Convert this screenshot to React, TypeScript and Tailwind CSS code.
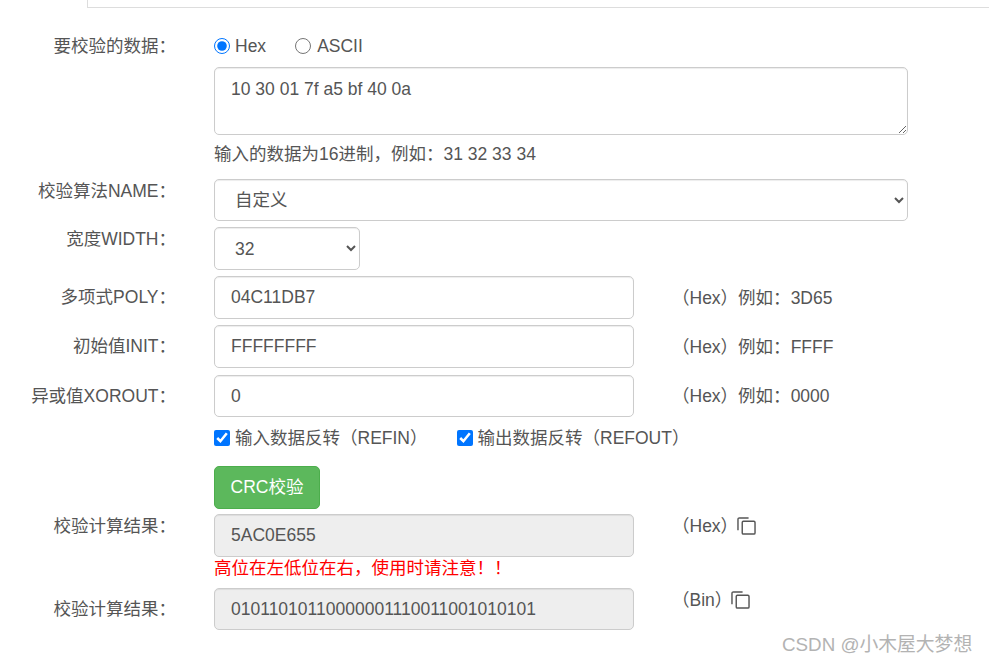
import type { ReactNode } from 'react';

const field = 'h-full w-full rounded-[5px] border border-[#ccc] px-4 text-[17.5px] text-[#555] outline-none shadow-[inset_0_1px_1px_rgba(0,0,0,0.075)]';

function CopyIcon() {
  return (
    <svg className="-ml-[1px] h-[18px] w-[19px] shrink-0 text-[#555]" viewBox="0 0 20 19" fill="none" stroke="currentColor" strokeWidth="1.5">
      <path d="M1 14V2.6c0-1 .6-1.6 1.6-1.6h9.6" />
      <rect x="5.5" y="4.5" width="13.5" height="13.5" rx="1.2" />
    </svg>
  );
}

function Row({ label, className, labelClass = 'pt-[9px]', children }: { label?: string; className: string; labelClass?: string; children: ReactNode }) {
  return (
    <div className={`grid grid-cols-[176px_694px] gap-x-[38px] ${className}`}>
      <div className={`text-right leading-6 whitespace-nowrap ${labelClass}`}>{label}</div>
      <div className="min-w-0">{children}</div>
    </div>
  );
}

function HexRow({ label, value, hint, className }: { label: string; value: string; hint: string; className: string }) {
  return (
    <Row label={label} className={className}>
      <div className="flex h-full items-center">
        <input className={`${field} !w-[420px] shrink-0`} defaultValue={value} />
        <span className="ml-[38px] leading-6 whitespace-nowrap">（Hex）例如：{hint}</span>
      </div>
    </Row>
  );
}

export default function App() {
  return (
    <div className="relative h-[664px] w-[989px] overflow-hidden bg-white font-['Liberation_Sans','Noto_Sans_CJK_SC',sans-serif] text-[17.5px] text-[#555]">
      <div className="ml-[87px] h-2 border-b border-l border-[#ddd]" />

      <Row label="要校验的数据：" className="mt-[26px]" labelClass="">
        <div className="flex h-6 items-center">
          <label className="flex items-center">
            <input type="radio" name="fmt" defaultChecked className="m-0 h-4 w-4 accent-[#0075ff]" />
            <span className="ml-[5px]">Hex</span>
          </label>
          <label className="ml-[29px] flex items-center">
            <input type="radio" name="fmt" className="m-0 h-4 w-4 accent-[#0075ff]" />
            <span className="ml-[6px]">ASCII</span>
          </label>
        </div>
      </Row>

      <Row className="mt-[9px]">
        <textarea className={`${field} block !h-[68px] py-[9px] leading-6`} defaultValue="10 30 01 7f a5 bf 40 0a" />
        <p className="mt-[7px] leading-6">输入的数据为16进制，例如：31 32 33 34</p>
      </Row>

      <Row label="校验算法NAME：" className="mt-[13px] h-[42px]" labelClass="pt-0">
        <select className={`${field} bg-white`} defaultValue="custom">
          <option value="custom">自定义</option>
        </select>
      </Row>

      <Row label="宽度WIDTH：" className="mt-[6px] h-[43px]" labelClass="pt-0">
        <select className={`${field} !w-[146px] bg-white`} defaultValue="32">
          <option value="32">32</option>
        </select>
      </Row>

      <HexRow label="多项式POLY：" value="04C11DB7" hint="3D65" className="mt-[6px] h-[43px]" />
      <HexRow label="初始值INIT：" value="FFFFFFFF" hint="FFFF" className="mt-[6px] h-[43px]" />
      <HexRow label="异或值XOROUT：" value="0" hint="0000" className="mt-[7px] h-[42px]" />

      <Row className="mt-[9px]" labelClass="">
        <div className="flex h-6 items-center whitespace-nowrap">
          <label className="flex items-center">
            <input type="checkbox" defaultChecked className="m-0 h-4 w-4 accent-[#0075ff]" />
            <span className="ml-[5px]">输入数据反转（REFIN）</span>
          </label>
          <label className="ml-[29px] flex items-center">
            <input type="checkbox" defaultChecked className="m-0 h-4 w-4 accent-[#0075ff]" />
            <span className="ml-[5px]">输出数据反转（REFOUT）</span>
          </label>
        </div>
      </Row>

      <Row className="mt-[16px]" labelClass="">
        <button className="h-[43px] w-[106px] rounded-[5px] border border-[#4cae4c] bg-[#5cb85c] text-[17.5px] text-white">CRC校验</button>
      </Row>

      <Row label="校验计算结果：" className="mt-[5px]" labelClass="pt-0">
        <div className="flex h-[43px] items-start">
          <input readOnly className={`${field} !w-[420px] shrink-0 bg-[#eee]`} defaultValue="5AC0E655" />
          <span className="ml-[38px] flex items-center whitespace-nowrap leading-6">
            （Hex）<CopyIcon />
          </span>
        </div>
        <p className="mt-[-1px] leading-6 text-[#f00]">高位在左低位在右，使用时请注意！！</p>
      </Row>

      <Row label="校验计算结果：" className="mt-[8px]">
        <div className="flex h-[42px] items-start">
          <input readOnly className={`${field} !w-[420px] shrink-0 bg-[#eee]`} defaultValue="01011010110000001110011001010101" />
          <span className="ml-[38px] flex items-center whitespace-nowrap leading-6">
            （Bin）<CopyIcon />
          </span>
        </div>
      </Row>

      <div className="absolute top-[634px] left-[782px] text-[18.8px] leading-[22px] whitespace-nowrap text-[#b3b3b3]">CSDN @小木屋大梦想</div>
    </div>
  );
}
